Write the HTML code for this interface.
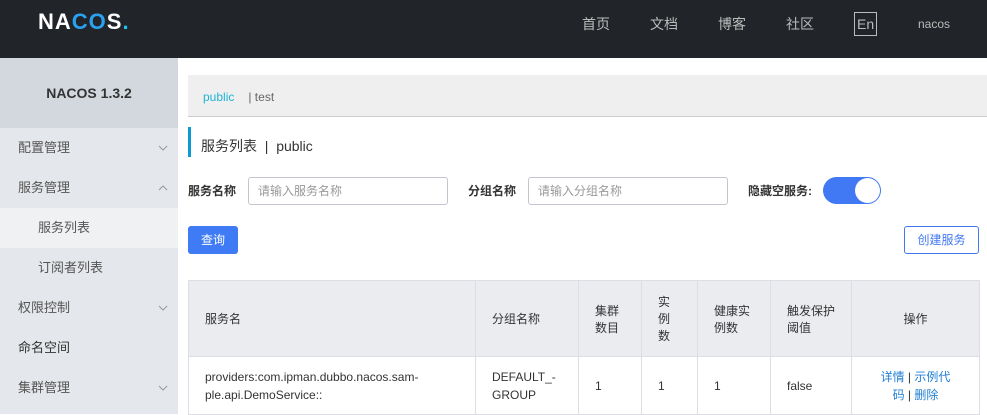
<!DOCTYPE html>
<html><head><meta charset="utf-8"><style>
*{box-sizing:border-box;margin:0;padding:0}
body{width:987px;height:414px;overflow:hidden;background:#fff;font-family:"Liberation Sans","Noto Sans CJK SC",sans-serif;font-size:12px;color:#333;position:relative}
.hdr{position:absolute;left:0;top:0;width:987px;height:58px;background:#212529}
.logo{position:absolute;left:38px;top:9px;font-size:22px;font-weight:bold;color:#fff;letter-spacing:1px}
.nav{position:absolute;top:14px;font-size:14px;color:#bbb}
.side{position:absolute;left:0;top:58px;width:178px;height:356px;background:#e4e7eb}
.ver{height:70px;background:#d3d8df;text-align:center;line-height:70px;font-weight:bold;font-size:14px;color:#333}
.mi{height:40px;line-height:40px;padding-left:18px;font-size:13px;color:#555;position:relative}
.mi svg{position:absolute;right:10px;top:16px}
.sub{padding-left:38px}
.act{background:#eff1f3}
.abs{position:absolute}
.inp{position:absolute;height:28px;border:1px solid #c4c6cf;border-radius:3px;color:#999;font-size:12px;line-height:26px;padding-left:9px}
.lbl{position:absolute;font-weight:bold;font-size:12px;color:#333}
table{position:absolute;left:188px;top:280px;border-collapse:collapse;font-size:12px;color:#333}
td{border:1px solid #dcdee3;padding:0 8px 0 16px;vertical-align:middle}
thead td{background:#ebecf0;height:76px}
tbody td{height:58px}
a{color:#1f7fd4;text-decoration:none}
</style></head><body>
<div class="hdr">
<div class="logo">NA<span style="color:#2aa1f0">CO</span>S<span style="color:#1cc3f0">.</span></div>
<div class="nav" style="left:582px">首页</div>
<div class="nav" style="left:650px">文档</div>
<div class="nav" style="left:718px">博客</div>
<div class="nav" style="left:786px">社区</div>
<div class="nav" style="left:854px;top:12px;border:1px solid #bbb;padding:1px 2px;font-size:14px;line-height:20px">En</div>
<div class="nav" style="left:918px;font-size:12px;top:17px">nacos</div>
</div>
<div class="side">
<div class="ver">NACOS 1.3.2</div>
<div class="mi">配置管理<svg width="10" height="8"><path d="M1 2l4 4 4-4" fill="none" stroke="#999" stroke-width="1"/></svg></div>
<div class="mi">服务管理<svg width="10" height="8"><path d="M1 6l4-4 4 4" fill="none" stroke="#999" stroke-width="1"/></svg></div>
<div class="mi sub act">服务列表</div>
<div class="mi sub">订阅者列表</div>
<div class="mi">权限控制<svg width="10" height="8"><path d="M1 2l4 4 4-4" fill="none" stroke="#999" stroke-width="1"/></svg></div>
<div class="mi" style="color:#333">命名空间</div>
<div class="mi">集群管理<svg width="10" height="8"><path d="M1 2l4 4 4-4" fill="none" stroke="#999" stroke-width="1"/></svg></div>
</div>
<div class="abs" style="left:188px;top:75px;width:799px;height:42px;background:#efefef;border-bottom:1px solid #ccc;line-height:44px;padding-left:15px;font-size:12px"><span style="color:#1fb3d6">public</span><span style="color:#666;margin-left:14px">| test</span></div>
<div class="abs" style="left:188px;top:127px;width:3px;height:30px;background:#0e9ad3"></div>
<div class="abs" style="left:201px;top:136px;font-size:14px;color:#333">服务列表 &nbsp;|&nbsp; public</div>
<div class="lbl" style="left:188px;top:182px">服务名称</div>
<div class="inp" style="left:248px;top:177px;width:200px">请输入服务名称</div>
<div class="lbl" style="left:468px;top:182px">分组名称</div>
<div class="inp" style="left:528px;top:177px;width:200px">请输入分组名称</div>
<div class="lbl" style="left:748px;top:182px">隐藏空服务:</div>
<div class="abs" style="left:823px;top:177px;width:58px;height:27px;border-radius:14px;background:#4178f4"><div class="abs" style="right:1px;top:1px;width:25px;height:25px;border-radius:50%;background:#fff"></div></div>
<div class="abs" style="left:188px;top:226px;width:50px;height:28px;background:#3e7bf4;border-radius:3px;color:#fff;text-align:center;line-height:28px">查询</div>
<div class="abs" style="left:904px;top:226px;width:75px;height:28px;border:1px solid #4178f4;border-radius:3px;color:#4178f4;text-align:center;line-height:26px">创建服务</div>
<table>
<colgroup><col style="width:287px"><col style="width:103px"><col style="width:63px"><col style="width:56px"><col style="width:73px"><col style="width:81px"><col style="width:128px"></colgroup>
<thead><tr><td>服务名</td><td>分组名称</td><td>集群<br>数目</td><td>实<br>例<br>数</td><td>健康实<br>例数</td><td>触发保护<br>阈值</td><td style="text-align:center;padding:0">操作</td></tr></thead>
<tbody><tr><td style="line-height:18px">providers:com.ipman.dubbo.nacos.sam-<br>ple.api.DemoService::</td><td style="line-height:18px">DEFAULT_-<br>GROUP</td><td>1</td><td>1</td><td>1</td><td>false</td><td style="text-align:center;padding:0;line-height:18px"><a>详情</a> | <a>示例代</a><br><a>码</a> | <a>删除</a></td></tr></tbody>
</table>
</body></html>
